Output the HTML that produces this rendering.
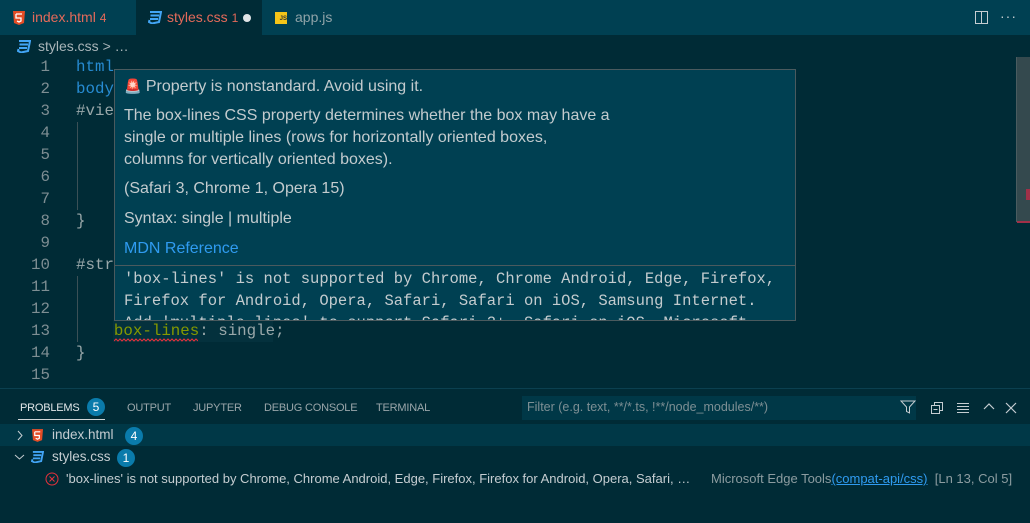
<!DOCTYPE html>
<html><head><meta charset="utf-8"><style>
*{margin:0;padding:0;box-sizing:border-box}
body{width:1030px;height:523px;background:#002b36;overflow:hidden;position:relative;font-family:"Liberation Sans",sans-serif;color:#c5cdd1}
.abs{position:absolute}
.tabs{left:0;top:0;width:1030px;height:35px;background:#004052}
.tab{top:0;height:35px;font-size:14px;line-height:35px;white-space:nowrap}
.ln{left:0;width:50px;text-align:right;font-size:15.8px;color:#7e8e93;font-family:"Liberation Mono",monospace;line-height:22px}
.code{left:76px;font-size:15.8px;font-family:"Liberation Mono",monospace;line-height:22px;color:#9aa8aa}
.hover{left:114px;top:69px;width:682px;height:252px;background:#004052;border:1px solid #4a5a5e;overflow:hidden}
.hover p{position:absolute;left:9px;font-size:16px;color:#c3cbce;line-height:22px;white-space:nowrap}
.badge{display:inline-block;width:18px;height:18px;border-radius:9px;background:#0a7bab;color:#fff;font-size:12px;line-height:18px;text-align:center}
.pt{top:401px;font-size:11px;letter-spacing:-0.2px;color:#9aa6aa;line-height:15px}
</style></head><body>
<div class="abs tabs"></div>
<div class="abs tab" style="left:0;width:135px;background:#004052">
 <svg class="abs" style="left:13px;top:11px" width="12" height="14" viewBox="0 0 12 14"><path d="M0 0h12l-1 12-5 2-5-2z" fill="#e44d26"/><path d="M3 3h6M3 3v4h5v3l-2 1-2-1" stroke="#fff" stroke-width="1.3" fill="none"/></svg>
 <span class="abs" style="left:32px;color:#e56a5a">index.html <span style="font-size:12px">4</span></span></div>
<div class="abs tab" style="left:136px;width:126px;background:#002b36">
 <svg class="abs" style="left:12px;top:11px" width="14" height="13" viewBox="0 0 14 13"><path d="M2 1h11l-2 10-7 1.5-3-1.5.5-2M2.5 4.5h8.5M2 8h8" stroke="#42a5f5" stroke-width="2" fill="none"/></svg>
 <span class="abs" style="left:31px;color:#e56a5a">styles.css <span style="font-size:12px">1</span></span>
 <span class="abs" style="left:107px;top:14px;width:8px;height:8px;border-radius:4px;background:#e0e4e6"></span></div>
<div class="abs tab" style="left:263px;width:117px;background:#004052">
 <span class="abs" style="left:12px;top:12px;width:12px;height:12px;background:#f5c518;font-size:6px;line-height:14px;color:#333;text-align:right;font-weight:bold">JS</span>
 <span class="abs" style="left:32px;color:#8fa3a8">app.js</span></div>
<svg class="abs" style="left:975px;top:11px" width="14" height="14"><rect x="0.5" y="0.5" width="12" height="12" fill="none" stroke="#c5cdd1"/><path d="M6.5 0v13" stroke="#c5cdd1"/></svg>
<span class="abs" style="left:1000px;top:8px;color:#c5cdd1;font-size:14px;letter-spacing:1px">···</span>
<svg class="abs" style="left:17px;top:40px" width="14" height="13" viewBox="0 0 14 13"><path d="M2 1h11l-2 10-7 1.5-3-1.5.5-2M2.5 4.5h8.5M2 8h8" stroke="#42a5f5" stroke-width="2" fill="none"/></svg>
<span class="abs" style="left:38px;top:38px;font-size:14px;color:#a9b5b9">styles.css &gt; …</span>
<div class="abs ln" style="top:56px">1<br>2<br>3<br>4<br>5<br>6<br>7<br>8<br>9<br>10<br>11<br>12<br>13<br>14<br>15</div>
<div class="abs" style="left:113px;top:320px;width:160px;height:22px;background:#073642;opacity:.6"></div>
<div class="abs code" style="top:56px;white-space:pre"><span style="color:#268bd2">html</span>
<span style="color:#268bd2">body</span>
#vie




}

#str


<span style="color:#859900">    box-lines</span>: single;
}</div>
<svg class="abs" style="left:114px;top:338px" width="84" height="4"><path d="M0 3 l2-2 2 2 2-2 2 2 2-2 2 2 2-2 2 2 2-2 2 2 2-2 2 2 2-2 2 2 2-2 2 2 2-2 2 2 2-2 2 2 2-2 2 2 2-2 2 2 2-2 2 2 2-2 2 2 2-2 2 2 2-2 2 2 2-2 2 2 2-2 2 2 2-2 2 2 2-2 2 2 2-2 2 2" stroke="#e4323c" fill="none" stroke-width="1"/></svg>
<div class="abs" style="left:77px;top:276px;width:1px;height:66px;background:#3b5056"></div>
<div class="abs" style="left:77px;top:122px;width:1px;height:88px;background:#3b5056"></div>
<div class="abs" style="left:1016px;top:57px;width:14px;height:165px;background:#34494e;border-left:1px solid #4a5c60"></div>
<div class="abs" style="left:1026px;top:189px;width:4px;height:11px;background:#a03048"></div>
<div class="abs" style="left:1017px;top:221px;width:13px;height:2px;background:#a03048"></div>
<div class="abs hover">
 <p style="top:5px"><span style="font-size:14px">🚨</span> Property is nonstandard. Avoid using it.</p>
 <p style="top:35px">The box-lines CSS property determines whether the box may have a<br>single or multiple lines (rows for horizontally oriented boxes,<br>columns for vertically oriented boxes).</p>
 <p style="top:108px">(Safari 3, Chrome 1, Opera 15)</p>
 <p style="top:138px">Syntax: single | multiple</p>
 <p style="top:168px;color:#2f9bf0">MDN Reference</p>
 <div class="abs" style="left:0;top:195px;width:682px;height:1px;background:#4a5a5e"></div>
 <p style="top:198px;font-family:'Liberation Mono',monospace;font-size:15.5px;line-height:22px">'box-lines' is not supported by Chrome, Chrome Android, Edge, Firefox,<br>Firefox for Android, Opera, Safari, Safari on iOS, Samsung Internet.<br>Add 'multiple-lines' to support Safari 3+, Safari on iOS, Microsoft</p>
</div>
<div class="abs" style="left:0;top:388px;width:1030px;height:135px;background:#002b36;border-top:1px solid #0b4050"></div>
<span class="abs pt" style="left:20px;color:#e0e6e8">PROBLEMS</span>
<span class="abs badge" style="left:87px;top:398px">5</span>
<div class="abs" style="left:18px;top:419px;width:87px;height:1px;background:#d0d6d8"></div>
<span class="abs pt" style="left:127px">OUTPUT</span>
<span class="abs pt" style="left:193px">JUPYTER</span>
<span class="abs pt" style="left:264px">DEBUG CONSOLE</span>
<span class="abs pt" style="left:376px">TERMINAL</span>
<div class="abs" style="left:522px;top:396px;width:394px;height:24px;background:#003847"></div>
<span class="abs" style="left:527px;top:400px;font-size:12.5px;color:#7d8f94">Filter (e.g. text, **/*.ts, !**/node_modules/**)</span>
<svg class="abs" style="left:900px;top:400px" width="16" height="15"><path d="M1 1h14l-5.5 6v6l-3-1.5v-4.5z" fill="none" stroke="#c5cdd1"/></svg>
<svg class="abs" style="left:930px;top:401px" width="14" height="14"><rect x="4.5" y="1.5" width="8" height="8" fill="none" stroke="#c5cdd1"/><rect x="1.5" y="4.5" width="8" height="8" fill="#002b36" stroke="#c5cdd1"/><path d="M3.5 8.5h4" stroke="#c5cdd1"/></svg>
<svg class="abs" style="left:956px;top:402px" width="14" height="12"><path d="M1 1.5h12M1 4.5h12M1 7.5h12M1 10.5h12" stroke="#c5cdd1"/></svg>
<svg class="abs" style="left:982px;top:402px" width="14" height="10"><path d="M2 7l5-5 5 5" stroke="#c5cdd1" fill="none" stroke-width="1.2"/></svg>
<svg class="abs" style="left:1005px;top:402px" width="12" height="12"><path d="M1 1l10 10M11 1L1 11" stroke="#c5cdd1" stroke-width="1.2"/></svg>
<div class="abs" style="left:0;top:424px;width:1030px;height:22px;background:#003847"></div>
<svg class="abs" style="left:16px;top:430px" width="8" height="11"><path d="M2 1l4 4.5-4 4.5" stroke="#c5cdd1" fill="none"/></svg>
<svg class="abs" style="left:32px;top:429px" width="11" height="13" viewBox="0 0 12 14"><path d="M0 0h12l-1 12-5 2-5-2z" fill="#e44d26"/><path d="M3 3h6M3 3v4h5v3l-2 1-2-1" stroke="#fff" stroke-width="1.3" fill="none"/></svg>
<span class="abs" style="left:52px;top:427px;font-size:13.5px;color:#c5cdd1">index.html</span>
<span class="abs badge" style="left:125px;top:427px">4</span>
<svg class="abs" style="left:14px;top:453px" width="11" height="8"><path d="M1 2l4.5 4 4.5-4" stroke="#c5cdd1" fill="none"/></svg>
<svg class="abs" style="left:31px;top:451px" width="13" height="12" viewBox="0 0 14 13"><path d="M2 1h11l-2 10-7 1.5-3-1.5.5-2M2.5 4.5h8.5M2 8h8" stroke="#42a5f5" stroke-width="2" fill="none"/></svg>
<span class="abs" style="left:52px;top:449px;font-size:13.5px;color:#c5cdd1">styles.css</span>
<span class="abs badge" style="left:117px;top:449px">1</span>
<svg class="abs" style="left:45px;top:472px" width="14" height="14"><circle cx="7" cy="7" r="6" fill="none" stroke="#e4323c"/><path d="M4.5 4.5l5 5M9.5 4.5l-5 5" stroke="#e4323c"/></svg>
<span class="abs" style="left:66px;top:471px;font-size:13px;color:#c5cdd1;white-space:nowrap;width:636px;overflow:hidden">'box-lines' is not supported by Chrome, Chrome Android, Edge, Firefox, Firefox for Android, Opera, Safari, …</span>
<span class="abs" style="left:711px;top:471px;font-size:13px;color:#8c9ca0;white-space:nowrap">Microsoft Edge Tools<span style="color:#2f9bf0;text-decoration:underline">(compat-api/css)</span>&nbsp; [Ln 13, Col 5]</span>
</body></html>
